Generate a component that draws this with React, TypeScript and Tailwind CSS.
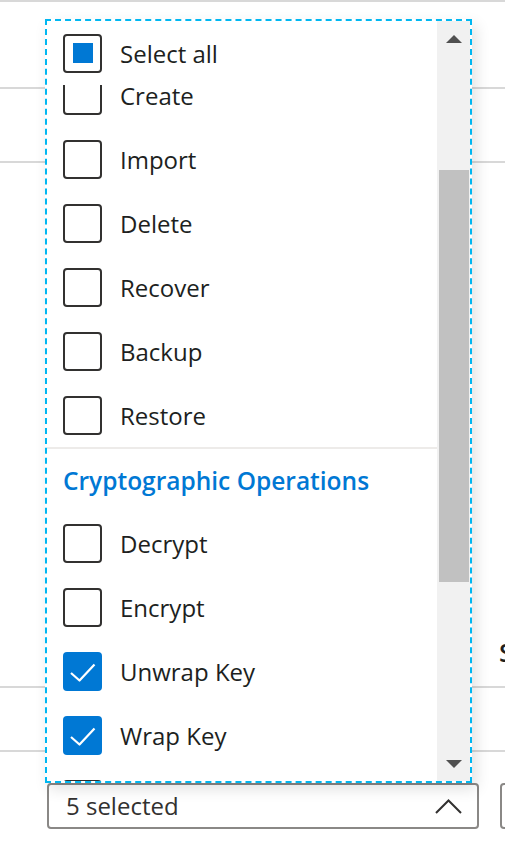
import { useState } from 'react'

const PERMISSIONS = [
  { label: 'Create', checked: false },
  { label: 'Import', checked: false },
  { label: 'Delete', checked: false },
  { label: 'Recover', checked: false },
  { label: 'Backup', checked: false },
  { label: 'Restore', checked: false },
]

const CRYPTO = [
  { label: 'Decrypt', checked: false },
  { label: 'Encrypt', checked: false },
  { label: 'Unwrap Key', checked: true },
  { label: 'Wrap Key', checked: true },
  { label: 'Verify', checked: false },
]

function Box({ state }: { state: 'on' | 'off' | 'mixed' }) {
  if (state === 'on') {
    return (
      <span className="flex h-[39px] w-[39px] shrink-0 items-center justify-center rounded-[4px] bg-[#0078d4]">
        <svg width="39" height="39" viewBox="0 0 39 39" fill="none">
          <polyline points="8,21 16.5,28.5 31.5,12.5" stroke="white" strokeWidth="2.2" strokeLinejoin="round" />
        </svg>
      </span>
    )
  }
  return (
    <span className="flex h-[39px] w-[39px] shrink-0 items-center justify-center rounded-[4px] border-2 border-[#323130] bg-white">
      {state === 'mixed' && <span className="h-[20px] w-[20px] bg-[#0078d4]" />}
    </span>
  )
}

function Option({ label, checked }: { label: string; checked: boolean }) {
  return (
    <div className="flex h-[64px] shrink-0 items-center gap-[18px] pl-4">
      <Box state={checked ? 'on' : 'off'} />
      <span className="pt-[2px] text-[#201f1e]">{label}</span>
    </div>
  )
}

export default function App() {
  const [open] = useState(true)

  return (
    <div className="relative h-[858px] w-[505px] overflow-hidden bg-white text-[24px] text-[#323130]" style={{ fontFamily: '"Open Sans", "Noto Sans", sans-serif' }}>
      {/* page behind the dropdown */}
      <div className="h-[89px] border-t-2 border-b-2 border-[#d8d8d8]" />
      <div className="h-[74px] border-b-2 border-[#d8d8d8]" />
      <div className="h-[525px] border-b-2 border-[#d8d8d8]">
        <div className="-ml-[8px] pt-[170px] leading-none text-[#605e5c]">)</div>
        <div className="pl-[499px] pt-[282px] text-[26px] font-semibold leading-none text-[#201f1e]">S</div>
      </div>
      <div className="h-[64px] border-b-2 border-[#d8d8d8]" />
      <div className="flex gap-[21px] pl-[47px] pt-[31px]">
        <div className="flex h-[46px] w-[432px] shrink-0 items-center justify-between rounded-[4px] border-2 border-[#8a8886] pl-[17px] pr-[15px]">
          <span className="leading-none text-[#323130]">5 selected</span>
          <svg width="27" height="15" viewBox="0 0 27 15" fill="none">
            <polyline points="1,14 13.5,1.5 26,14" stroke="#323130" strokeWidth="2" />
          </svg>
        </div>
        <div className="h-[46px] w-[40px] shrink-0 rounded-[4px] border-2 border-[#8a8886]" />
      </div>

      {open && (
        <div className="absolute left-[45px] top-[19px] flex h-[764px] w-[427px] border-2 border-dashed border-[#00b7f1] bg-white shadow-[4px_6px_14px_rgba(0,0,0,0.12)]">
          <div className="flex flex-1 flex-col overflow-hidden">
            <div className="relative z-10 flex h-[64px] shrink-0 items-center gap-[18px] bg-white pl-4">
              <Box state="mixed" />
              <span className="pt-[2px] text-[#201f1e]">Select all</span>
            </div>
            <div className="-mt-[22px] flex flex-col">
              {PERMISSIONS.map(p => <Option key={p.label} {...p} />)}
              <div className="flex h-[64px] items-center border-t-2 border-[#edebe9] pl-4 pt-[2px] text-[24.5px] font-semibold text-[#0078d4]">Cryptographic Operations</div>
              {CRYPTO.map(p => <Option key={p.label} {...p} />)}
            </div>
          </div>

          {/* scrollbar */}
          <div className="flex w-[33px] shrink-0 flex-col items-center bg-[#f1f1f1]">
            <div className="mt-[14px] h-0 w-0 border-x-[8px] border-b-[8px] border-x-transparent border-b-[#505050]" />
            <div className="ml-[2px] mr-[1px] mt-[127px] h-[412px] w-[30px] bg-[#c1c1c1]" />
            <div className="mb-[13px] mt-auto h-0 w-0 border-x-[8px] border-t-[8px] border-x-transparent border-t-[#505050]" />
          </div>
        </div>
      )}
    </div>
  )
}
